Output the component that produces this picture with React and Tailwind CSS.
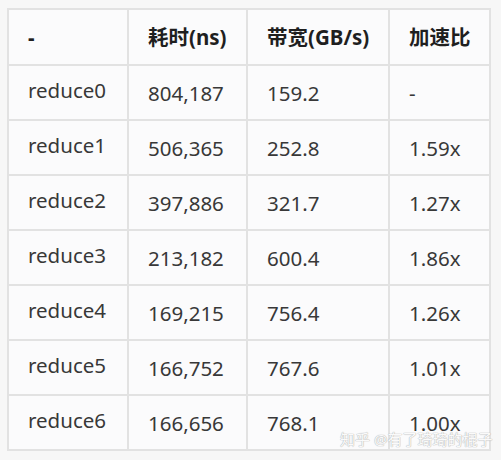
const rows = [
  ["reduce0", "804,187", "159.2", "-"],
  ["reduce1", "506,365", "252.8", "1.59x"],
  ["reduce2", "397,886", "321.7", "1.27x"],
  ["reduce3", "213,182", "600.4", "1.86x"],
  ["reduce4", "169,215", "756.4", "1.26x"],
  ["reduce5", "166,752", "767.6", "1.01x"],
  ["reduce6", "166,656", "768.1", "1.00x"],
];

const headers = ["-", "耗时(ns)", "带宽(GB/s)", "加速比"];

export default function App() {
  return (
    <div
      className="relative w-[501px] h-[460px] bg-[#f7f7f7] pt-[8px] pl-[7px]"
      style={{ fontFamily: '"Noto Sans", "Noto Sans CJK SC", sans-serif' }}
    >
      <table className="w-[484px] table-fixed border-collapse border-2 border-[#e2e2e2] bg-[#fbfbfc] text-[20.5px] text-[#383838]">
        <colgroup>
          <col className="w-[120px]" />
          <col className="w-[119px]" />
          <col className="w-[142px]" />
          <col />
        </colgroup>
        <thead>
          <tr className="h-[56px]">
            {headers.map((h) => (
              <th
                key={h}
                className="border-2 border-[#e2e2e2] px-[19px] text-left font-bold text-[#1f1f1f] whitespace-nowrap"
              >
                {h}
              </th>
            ))}
          </tr>
        </thead>
        <tbody>
          {rows.map((r) => (
            <tr key={r[0]} className="h-[55px]">
              {r.map((c, i) => (
                <td
                  key={i}
                  className={
                    "border-2 border-[#e2e2e2] px-[19px] text-left whitespace-nowrap " +
                    (i === 0 ? "pb-[4px]" : "pt-[1px]")
                  }
                >
                  {c}
                </td>
              ))}
            </tr>
          ))}
        </tbody>
      </table>
      {/* watermark */}
      <div className="absolute left-[340px] top-[428px] text-[15px] text-[#fafafa] [text-shadow:0_0_1px_#b0b0b0,0_0_1px_#b0b0b0] whitespace-nowrap">
        知乎 @有了琦琦的棍子
      </div>
    </div>
  );
}
